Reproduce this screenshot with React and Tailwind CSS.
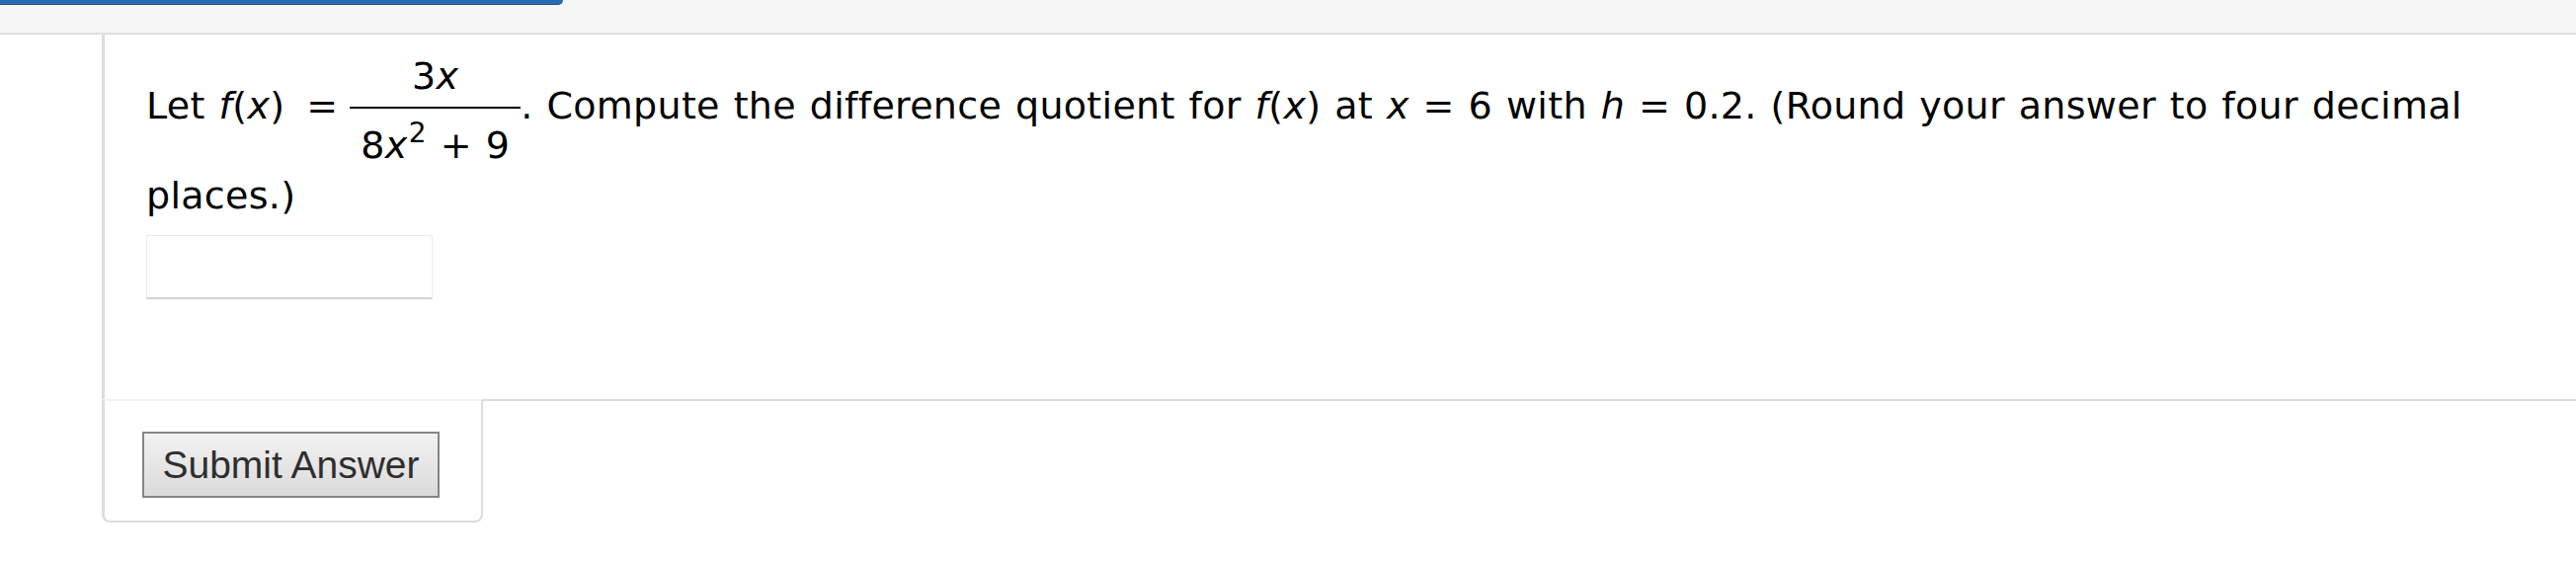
const Frac = ({ num, den }) => {
  return (
    <span className="inline-flex flex-col items-center align-[30px] leading-[44px] pb-[1px] ml-[4px]">
      <span className="px-[14px]">{num}</span>
      <span className="self-stretch h-[2px] bg-black mt-[9px] mb-[15px]" />
      <span className="px-[11px]">{den}</span>
    </span>
  );
};

const App = () => {
  return (
    <div className="w-[2608px] h-[570px] bg-white overflow-hidden font-['DejaVu_Sans','Verdana',sans-serif] text-black">
      <div className="h-[35px] bg-[#f6f6f6] border-b-2 border-[#dedede]">
        <div className="w-[570px] h-[5px] bg-[#2a6cb3] border-b border-[#1c4f8a] rounded-br-[6px]" />
      </div>

      <div className="ml-[103px]">
        <div className="border-l-[3px] border-b-2 border-[#dcdcdc] pl-[42px] pr-[30px] pt-[20px] pb-[101px]">
          <p className="text-[38px] leading-[48px] tracking-[0.3px] [word-spacing:1.5px]">
            Let <i>f</i>(<i>x</i>) <span className="mx-[8px]">=</span>
            <Frac
              num={<>3<i>x</i></>}
              den={<>8<i>x</i><span className="relative -top-[16px] text-[28px] ml-[1px]">2</span> + 9</>}
            />
            . Compute the difference quotient for <i>f</i>(<i>x</i>) at <i>x</i> = 6 with <i>h</i> = 0.2. (Round your answer to four decimal places.)
          </p>
          <input
            type="text"
            className="mt-[16px] block w-[290px] h-[65px] bg-white border border-[#ececec] border-b-2 border-b-[#d2d2d2] outline-none"
          />
        </div>

        <div className="relative -mt-[2px] w-[386px] bg-white border-l-[3px] border-r-2 border-b-2 border-[#dcdcdc] border-t-2 border-t-[#f3f3f3] rounded-b-[8px] pl-[38px] pt-[31px] pb-[23px]">
          <button className="w-[301px] h-[67px] bg-gradient-to-b from-[#f2f2f2] to-[#dadada] border-2 border-[#858585] text-[#2e2e2e] text-[39px] font-['Liberation_Sans','Arial',sans-serif] leading-none">
            Submit Answer
          </button>
        </div>
      </div>
    </div>
  );
};

export default App;
